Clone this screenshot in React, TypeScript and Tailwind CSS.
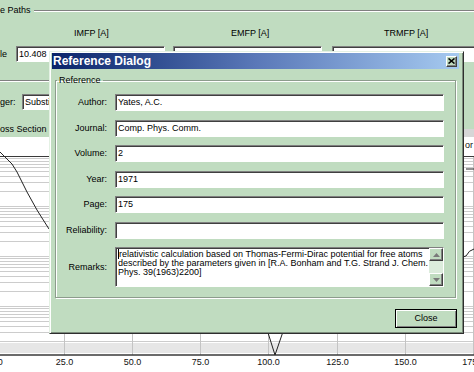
import React from "react";

// Windows-classic "Reference Dialog" floating over a green data window with a log-scale plot.

const sunken =
  "border border-t-[#808080] border-l-[#808080] border-r-white border-b-white bg-white shadow-[inset_1px_1px_0_#404040]";
const raised =
  "border border-t-white border-l-white border-r-[#404040] border-b-[#404040] bg-[#c0dcc0] shadow-[inset_-1px_-1px_0_#808080]";

const CHART_TOP = 137;
const ticks = ["0.0", "25.0", "50.0", "75.0", "100.0", "125.0", "150.0", "175.0"];

function gridRows() {
  const rows: number[] = [];
  for (let d = 0; d < 4; d++) {
    const top = 156 + d * 50;
    const bottom = top + 50;
    rows.push(top);
    for (let k = 2; k <= 9; k++) rows.push(Math.round(bottom - 50 * Math.log10(k)));
  }
  return rows;
}

function Chart() {
  const y = (v: number) => v - CHART_TOP;
  const tickX = (i: number) => Math.round(-4 + i * 68.1) + 0.5;
  return (
    <svg width={474} height={235} className="block">
      <rect width={474} height={235} fill="#ffffff" />
      {gridRows().map((r) => (
        <line key={r} x1={0} x2={474} y1={y(r) + 0.5} y2={y(r) + 0.5} stroke="#cccccc" strokeWidth={1} />
      ))}
      <rect x={0} y={y(343)} width={474} height={10} fill="#e6e6e6" />
      {ticks.map((_, i) => (
        <line key={i} x1={tickX(i)} x2={tickX(i)} y1={y(156)} y2={y(355)} stroke="#c4c4c4" strokeWidth={1} />
      ))}
      <line x1={0} x2={474} y1={y(156) + 0.5} y2={y(156) + 0.5} stroke="#3a3a3a" strokeWidth={1} />
      <line x1={0} x2={474} y1={y(355)} y2={y(355)} stroke="#3a3a3a" strokeWidth={1.5} />
      <path
        d={`M0 ${y(152)} L6 ${y(158)} L12 ${y(164)} L17 ${y(172)} L22 ${y(182)} L27 ${y(192)} L32 ${y(201)} L37 ${y(210)} L42 ${y(218)} L49 ${y(229)} L60 ${y(240)}`}
        fill="none"
        stroke="#222"
        strokeWidth={1}
      />
      <path d={`M264 ${y(320)} L275 ${y(355)} L287 ${y(320)}`} fill="none" stroke="#222" strokeWidth={1} />
      <path d={`M455 ${y(259)} L466 ${y(256)} Q469 ${y(250)} 474 ${y(249)}`} fill="none" stroke="#222" strokeWidth={1} />
      <line x1={466} x2={474} y1={y(169)} y2={y(169)} stroke="#222" strokeWidth={1} />
      <text x={465} y={y(148)} fontSize={9} fontFamily="'Liberation Sans', Arial, sans-serif" fill="#111">
        or
      </text>
      {ticks.map((t, i) => (
        <text
          key={t}
          x={tickX(i)}
          y={y(365)}
          fontSize={9}
          textAnchor="middle"
          fontFamily="'Liberation Sans', Arial, sans-serif"
          fill="#111"
        >
          {t}
        </text>
      ))}
    </svg>
  );
}

function MainWindow() {
  return (
    <div className="flex flex-col">
      <div className="flex h-[21px] items-center">
        <span>e Paths</span>
        <div className="ml-[3px] h-[2px] flex-1 border-t border-b border-t-[#808080] border-b-white" />
      </div>
      <div className="grid h-[24px] grid-cols-[74px_157px_153px_1fr] items-center">
        <span />
        <span>IMFP [A]</span>
        <span>EMFP [A]</span>
        <span>TRMFP [A]</span>
      </div>
      <div className="mt-[1px] flex h-[16px] items-center">
        <span className="w-[16px] shrink-0">le</span>
        <div className={`${sunken} flex h-full w-[149px] shrink-0 items-center pl-[2px]`}>10.408</div>
        <div className={`${sunken} ml-[8px] h-full w-[149px] shrink-0`} />
        <div className={`${sunken} ml-[10px] h-full w-[160px] shrink-0`} />
      </div>
      <div className="mt-[18px] h-[2px] w-[300px] border-t border-b border-t-[#808080] border-b-white" />
      <div className="mt-[12px] flex h-[16px] items-center">
        <span className="w-[22px] shrink-0">ger:</span>
        <div className={`${sunken} flex h-full w-[40px] items-center overflow-hidden pl-[2px]`}>Substi</div>
      </div>
      <div className="mt-[12px] flex h-[15px] items-center">
        <span>oss Section S</span>
        <div className="ml-auto h-[8px] w-[10px] self-end bg-[#d6d6d6]" />
      </div>
      <Chart />
    </div>
  );
}

function Field({ label, value }: { label: string; value: string }) {
  return (
    <div className="flex h-[17px] items-center">
      <span className="w-[51px] shrink-0 text-right">{label}</span>
      <div className={`${sunken} ml-[8px] flex h-full flex-1 items-center pl-[2px]`}>{value}</div>
    </div>
  );
}

function Arrow({ up }: { up?: boolean }) {
  return (
    <div className={`${raised} flex h-[13px] w-full items-center justify-center`}>
      <svg width={7} height={4} viewBox="0 0 7 4">
        <path d={up ? "M0 4 L3.5 0 L7 4 Z" : "M0 0 L3.5 4 L7 0 Z"} fill="#7a7a7a" />
      </svg>
    </div>
  );
}

function ReferenceDialog() {
  return (
    <div className="absolute left-[49px] top-[51px] flex h-[283px] w-[415px] flex-col border border-t-[#e4f1e4] border-l-[#e4f1e4] border-r-[#2e2e2e] border-b-[#2e2e2e] bg-[#c0dcc0] pb-[4px] pl-[2px] pr-[4px] pt-[1px] shadow-[inset_1px_1px_0_#ffffff,inset_-1px_-1px_0_#7c8c7c]">
      <div className="flex h-[16px] items-center justify-between bg-linear-to-r from-[#0a246a] via-[#5a78b8] to-[#a6caf0] pl-[1px] pr-[2px]">
        <span className="text-[12px] leading-none font-bold text-white">Reference Dialog</span>
        <div className={`${raised} flex h-[11px] w-[11px] items-center justify-center`}>
          <svg width={7} height={6} viewBox="0 0 7 6">
            <path d="M0.5 0.5 L6.5 5.5 M6.5 0.5 L0.5 5.5" stroke="#000" strokeWidth={1.6} />
          </svg>
        </div>
      </div>

      <fieldset className="mx-[3px] mt-[6px] h-[223px] border border-[#8c9c8c] pt-[8px] pr-[11px] shadow-[1px_1px_0_#ffffff,inset_1px_1px_0_#ffffff]">
        <legend className="ml-[1px] px-[2px] leading-[11px]">Reference</legend>
        <div className="flex flex-col gap-[8.5px]">
          <Field label="Author:" value="Yates, A.C." />
          <Field label="Journal:" value="Comp. Phys. Comm." />
          <Field label="Volume:" value="2" />
          <Field label="Year:" value="1971" />
          <Field label="Page:" value="175" />
          <Field label="Reliability:" value="" />
          <div className="flex h-[40px] items-center">
            <span className="w-[51px] shrink-0 text-right">Remarks:</span>
            <div className={`${sunken} ml-[8px] flex h-full flex-1`}>
              <div className="flex-1 whitespace-nowrap pl-[2px] pt-[2px] leading-[9px]">
                <div>
                  <span className="border-l border-black">relativistic calculation based on Thomas-Fermi-Dirac potential for free atoms</span>
                </div>
                <div>described by the parameters given in [R.A. Bonham and T.G. Strand J. Chem.</div>
                <div>Phys. 39(1963)2200]</div>
              </div>
              <div className="flex w-[14px] flex-col bg-[#dcecdc]">
                <Arrow up />
                <div className="flex-1" />
                <Arrow />
              </div>
            </div>
          </div>
        </div>
      </fieldset>

      <div className="mt-[11px] flex justify-end pr-[2px]">
        <button className="flex h-[19px] w-[62px] items-center justify-center border border-black bg-[#c0dcc0] shadow-[inset_1px_1px_0_#ffffff,inset_-1px_-1px_0_#808080]">
          Close
        </button>
      </div>
    </div>
  );
}

export default function App() {
  return (
    <div className="relative h-[372px] w-[474px] overflow-hidden bg-[#c0dcc0] font-['Liberation_Sans',Arial,sans-serif] text-[9px] leading-[11px] text-black">
      <MainWindow />
      <ReferenceDialog />
    </div>
  );
}
